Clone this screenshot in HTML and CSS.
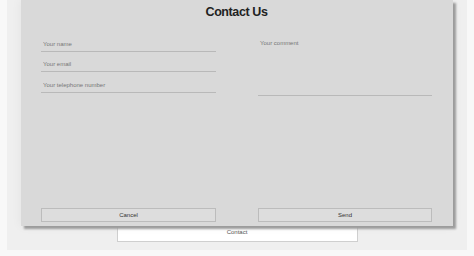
FILE: index.html
```html
<!DOCTYPE html>
<html lang="en">
<head>
  <meta charset="UTF-8">
  <meta name="viewport" content="width=device-width, initial-scale=1.0">
  <title>Contact Us</title>
  <link rel="stylesheet" href="styles.css">
</head>
<body>

  <div class="page">
    <button class="open-btn">Contact</button>
  </div>

  <div class="modal">
    <h2>Contact Us</h2>
    <form class="contact-form">
      <div class="fields">
        <div class="col">
          <input type="text" placeholder="Your name">
          <input type="email" placeholder="Your email">
          <input type="tel" placeholder="Your telephone number">
        </div>
        <div class="col">
          <textarea placeholder="Your comment"></textarea>
        </div>
      </div>
      <div class="actions">
        <button type="button">Cancel</button>
        <button type="button">Send</button>
      </div>
    </form>
  </div>

</body>
</html>
```

FILE: styles.css
```css
* {
  margin: 0;
  padding: 0;
  box-sizing: border-box;
}

body {
  font-family: "Liberation Sans", Arial, sans-serif;
  background: #f8f8f8;
  color: #333;
}

.page {
  margin: 0 7px;
  height: 250px;
  background: #efefef;
  display: flex;
  flex-direction: column;
  align-items: center;
  justify-content: flex-end;
  padding-bottom: 8px;
}

.open-btn {
  width: 241px;
  height: 20px;
  background: #fff;
  border: 1px solid #cfcfcf;
  font-family: inherit;
  font-size: 6px;
  color: #555;
}

/* Modal */
.modal {
  position: absolute;
  top: 0;
  left: 21px;
  width: 432px;
  height: 226px;
  padding: 4px 21px 4.5px 20px;
  background: #d9d9d9;
  box-shadow: 3px 3px 2px #9c9c9c, 0 0 10px rgba(0, 0, 0, 0.06);
  display: flex;
  flex-direction: column;
}

.modal h2 {
  font-size: 12.5px;
  line-height: 16px;
  text-align: center;
  color: #222;
  letter-spacing: -0.4px;
}

.contact-form {
  flex: 1;
  display: flex;
  flex-direction: column;
  margin-top: 16.5px;
}

.fields,
.actions {
  display: grid;
  grid-template-columns: 175px 174px;
  gap: 42px;
}

.col {
  display: flex;
  flex-direction: column;
  gap: 5.7px;
}

.col input,
.col textarea {
  width: 100%;
  border: none;
  border-bottom: 1px solid #b9b9b9;
  background: transparent;
  font-family: inherit;
  font-size: 6px;
  color: #333;
  outline: none;
}

.col input {
  height: 15px;
  padding: 0 2px;
}

.col textarea {
  height: 59.5px;
  padding: 3px 2px;
  resize: none;
}

.col input::placeholder,
.col textarea::placeholder {
  color: #777;
}

.actions {
  margin-top: auto;
}

.actions button {
  height: 13.5px;
  background: #dddddd;
  border: 1px solid #bcbcbc;
  font-family: inherit;
  font-size: 6px;
  color: #333;
}
```
